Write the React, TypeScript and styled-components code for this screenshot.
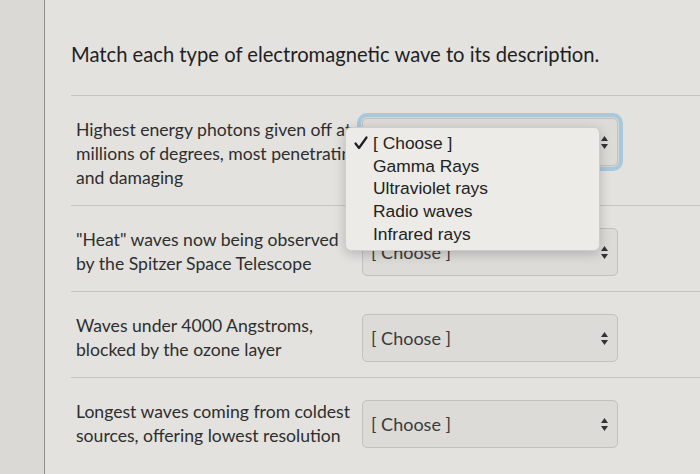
import styled, { createGlobalStyle, css } from 'styled-components';

const GlobalStyle = createGlobalStyle`
    html, body {
        margin: 0;
        padding: 0;
    }

    body {
        background: #e3e2df;
        font-family: 'Lato', 'Open Sans', sans-serif;
        color: #333333;
    }
`;

const Page = styled.div`
    display: flex;
    min-height: 474px;
    overflow: hidden;
`;

const Sidebar = styled.div`
    width: 44px;
    flex-shrink: 0;
    background: #dad9d5;
    border-right: 1px solid #8e8e8b;
`;

const Content = styled.div`
    flex: 1;
    padding-left: 26px;
`;

const Header = styled.div`
    padding: 42px 0 29px;
    border-bottom: 1px solid #c6c5c2;
`;

const Title = styled.div`
    font-size: 20.2px;
    line-height: 24px;
    color: #1f1f1f;
`;

const Row = styled.div`
    display: flex;
    align-items: flex-start;
    padding: 22px 0 15px 5px;
    border-bottom: 1px solid #c6c5c2;

    &:last-of-type {
        border-bottom: none;
    }
`;

const Prompt = styled.div`
    width: 277px;
    flex-shrink: 0;
    font-size: 17.6px;
    line-height: 24px;
    color: #2e2e2e;
`;

const Line = styled.span`
    display: block;
    white-space: nowrap;
`;

const SelectWrap = styled.div`
    position: relative;
    margin-left: 9px;
`;

const SelectBox = styled.div<{ $focused?: boolean }>`
    box-sizing: border-box;
    width: 256px;
    height: 48px;
    display: flex;
    align-items: center;
    justify-content: space-between;
    padding: 0 9px 0 8px;
    border: 1px solid #c2c1be;
    border-radius: 5px;
    background: #dcdbd8;
    font-size: 18px;
    color: #3a3a3a;

    ${(p) =>
        p.$focused &&
        css`
            box-shadow: 0 0 0 1px #d6d5d2, 0 0 0 5px #a8c8de;
        `}
`;

const Menu = styled.div`
    position: absolute;
    z-index: 10;
    left: -17px;
    top: 9px;
    width: 255px;
    box-sizing: border-box;
    padding: 4px 0 5px;
    background: #ecebe8;
    border: 1px solid rgba(0, 0, 0, 0.12);
    border-radius: 6px;
    box-shadow: 0 3px 12px rgba(0, 0, 0, 0.2);
`;

const MenuItem = styled.div`
    display: flex;
    align-items: center;
    padding-left: 8px;
    height: 22.7px;
    font-family: 'Liberation Sans', Arial, sans-serif;
    font-size: 17.4px;
    color: #222222;
`;

const CheckSlot = styled.span`
    width: 19px;
    display: flex;
    align-items: center;
`;

const CheckIcon = () => (
    <svg width="14" height="14" viewBox="0 0 14 14">
        <path d="M1.5 7.5 L5 12 L12.5 1.5" fill="none" stroke="#1e1e1e" strokeWidth="2.2" strokeLinecap="round" strokeLinejoin="round" />
    </svg>
);

const Arrows = () => (
    <svg width="7" height="13" viewBox="0 0 7 13">
        <path d="M3.5 0 L7 5 L0 5 Z" fill="#333" />
        <path d="M3.5 13 L7 8 L0 8 Z" fill="#333" />
    </svg>
);

const OPTIONS = ['[ Choose ]', 'Gamma Rays', 'Ultraviolet rays', 'Radio waves', 'Infrared rays'];

const QUESTIONS = [
    ['Highest energy photons given off at', 'millions of degrees, most penetrating', 'and damaging'],
    ['"Heat" waves now being observed', 'by the Spitzer Space Telescope'],
    ['Waves under 4000 Angstroms,', 'blocked by the ozone layer'],
    ['Longest waves coming from coldest', 'sources, offering lowest resolution'],
];

const App = () => {
    return (
        <Page>
            <GlobalStyle />
            <Sidebar />
            <Content>
                <Header>
                    <Title>Match each type of electromagnetic wave to its description.</Title>
                </Header>

                {QUESTIONS.map((lines, key) => (
                    <Row key={key}>
                        <Prompt>
                            {lines.map((line) => (
                                <Line key={line}>{line}</Line>
                            ))}
                        </Prompt>
                        <SelectWrap>
                            <SelectBox $focused={key === 0}>
                                <span>[ Choose ]</span>
                                <Arrows />
                            </SelectBox>
                            {key === 0 && (
                                <Menu>
                                    {OPTIONS.map((opt, i) => (
                                        <MenuItem key={opt}>
                                            <CheckSlot>{i === 0 && <CheckIcon />}</CheckSlot>
                                            {opt}
                                        </MenuItem>
                                    ))}
                                </Menu>
                            )}
                        </SelectWrap>
                    </Row>
                ))}
            </Content>
        </Page>
    );
};

export default App;
